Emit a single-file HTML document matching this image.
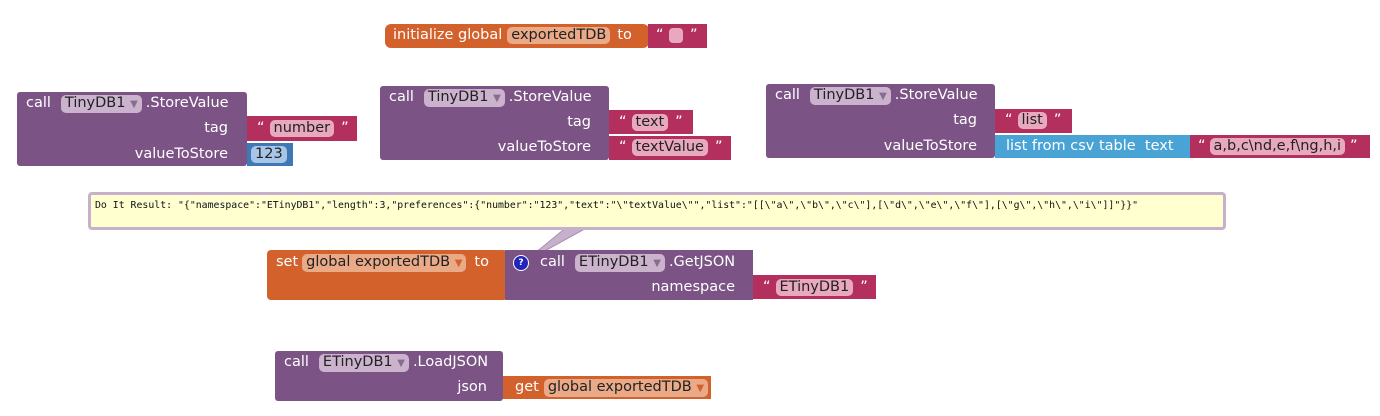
<!DOCTYPE html>
<html><head><meta charset="utf-8"><style>
body{margin:0;width:1380px;height:416px;background:#fff;position:relative;overflow:hidden;font-family:"DejaVu Sans","Liberation Sans",sans-serif;font-size:14.5px;}
.b{position:absolute;}
.p{background:#7b5385;border-radius:3px;}
.r{background:#b3305e;}
.o{background:#d2612c;}
.bl{background:#3f79b5;}
.c{background:#4aa3d5;}
.row{position:absolute;display:flex;align-items:center;gap:7px;color:#fff;white-space:nowrap;line-height:17px;height:17px;}
.t{position:absolute;color:#fff;white-space:nowrap;line-height:17px;}
.rt{position:absolute;color:#fff;white-space:nowrap;line-height:17px;text-align:right;}
.f{white-space:nowrap;line-height:17px;color:#222;border-radius:5px;padding:0 4px;}
.fp{background:#cbb3ce;}
.fr{background:#e8a9bf;}
.fo{background:#eaa987;}
.fb{background:#a7c5e6;}
.ar{color:#8a6c90;font-size:10px;}
.aro{color:#d2612c;font-size:10px;}
</style></head><body>

<!-- init global -->
<div class="b o" style="left:385px;top:24px;width:264px;height:24px;border-radius:6px"></div>
<div class="b r" style="left:648px;top:24px;width:59px;height:24px"></div>
<div class="row" style="left:393px;top:27px"><span>initialize global</span><span class="f fo" style="margin-left:-2px">exportedTDB</span><span>to</span></div>
<span class="t" style="left:656px;top:27px">“</span>
<div class="b" style="left:669px;top:28px;width:14px;height:15px;background:#e8a9bf;border-radius:4px"></div>
<span class="t" style="left:690px;top:27px">”</span>

<!-- Block A -->
<div class="b p" style="left:17px;top:92px;width:230px;height:74px"></div>
<div class="b r" style="left:247px;top:116px;width:110px;height:25px"></div>
<div class="b bl" style="left:247px;top:143px;width:46px;height:23px"></div>
<div class="row" style="left:26px;top:95px"><span style="margin-right:3px">call</span><span class="f fp">TinyDB1 <span class="ar">▼</span></span><span style="margin-left:-3px">.StoreValue</span></div>
<span class="rt" style="right:1152px;top:120px">tag</span>
<span class="rt" style="right:1152px;top:146px">valueToStore</span>
<div class="row" style="left:257px;top:120px"><span>“</span><span class="f fr" style="margin-left:-2px">number</span><span>”</span></div>
<span class="f fb" style="position:absolute;left:251px;top:146px">123</span>

<!-- Block B -->
<div class="b p" style="left:380px;top:86px;width:229px;height:74px"></div>
<div class="b r" style="left:609px;top:110px;width:84px;height:24px"></div>
<div class="b r" style="left:609px;top:136px;width:122px;height:24px"></div>
<div class="row" style="left:389px;top:89px"><span style="margin-right:3px">call</span><span class="f fp">TinyDB1 <span class="ar">▼</span></span><span style="margin-left:-3px">.StoreValue</span></div>
<span class="rt" style="right:789px;top:114px">tag</span>
<span class="rt" style="right:789px;top:139px">valueToStore</span>
<div class="row" style="left:619px;top:114px"><span>“</span><span class="f fr" style="margin-left:-2px">text</span><span>”</span></div>
<div class="row" style="left:619px;top:139px"><span>“</span><span class="f fr" style="margin-left:-2px">textValue</span><span>”</span></div>

<!-- Block C -->
<div class="b p" style="left:766px;top:84px;width:229px;height:74px"></div>
<div class="b r" style="left:995px;top:109px;width:77px;height:24px"></div>
<div class="b c" style="left:995px;top:135px;width:195px;height:23px"></div>
<div class="b r" style="left:1190px;top:135px;width:180px;height:23px"></div>
<div class="row" style="left:775px;top:87px"><span style="margin-right:3px">call</span><span class="f fp">TinyDB1 <span class="ar">▼</span></span><span style="margin-left:-3px">.StoreValue</span></div>
<span class="rt" style="right:403px;top:112px">tag</span>
<span class="rt" style="right:403px;top:138px">valueToStore</span>
<div class="row" style="left:1005px;top:112px"><span>“</span><span class="f fr" style="margin-left:-2px">list</span><span>”</span></div>
<span class="t" style="left:1006px;top:138px">list from csv table&nbsp; text</span>
<div class="row" style="left:1198px;top:138px;gap:5px"><span>“</span><span class="f fr" style="margin-left:-1px">a,b,c\nd,e,f\ng,h,i</span><span>”</span></div>

<!-- Result -->
<svg class="b" style="left:0;top:0" width="1380" height="416">
<polygon points="568,226 590,226 523,263" fill="#c7b0cb" stroke="#a98fb0"/>
</svg>
<div class="b" style="left:88px;top:192px;width:1132px;height:32px;background:#ffffd0;border:3px solid #c7b0cb;border-radius:4px"></div>
<span class="b" style="left:95px;top:200px;font-family:'DejaVu Sans Mono','Liberation Mono',monospace;font-size:9.85px;color:#111;white-space:nowrap">Do It Result: "{"namespace":"ETinyDB1","length":3,"preferences":{"number":"123","text":"\"textValue\"","list":"[[\"a\",\"b\",\"c\"],[\"d\",\"e\",\"f\"],[\"g\",\"h\",\"i\"]]"}}"</span>

<!-- set block -->
<div class="b o" style="left:267px;top:250px;width:240px;height:50px;border-radius:4px"></div>
<div class="b p" style="left:505px;top:250px;width:248px;height:50px;border-radius:0"></div>
<div class="b r" style="left:753px;top:275px;width:123px;height:24px"></div>
<div class="row" style="left:276px;top:254px"><span>set</span><span class="f fo" style="margin-left:-3px">global exportedTDB <span class="aro">▼</span></span><span style="margin-left:1px">to</span></div>
<div class="b" style="left:513px;top:255px;width:14px;height:14px;border-radius:50%;background:#2424b8;border:1px solid #fff;color:#fff;font-size:9px;line-height:14px;text-align:center;font-weight:bold">?</div>
<div class="row" style="left:540px;top:254px"><span style="margin-right:3px">call</span><span class="f fp">ETinyDB1 <span class="ar">▼</span></span><span style="margin-left:-3px">.GetJSON</span></div>
<span class="rt" style="right:645px;top:279px">namespace</span>
<div class="row" style="left:763px;top:279px"><span>“</span><span class="f fr" style="margin-left:-2px">ETinyDB1</span><span>”</span></div>

<!-- Load -->
<div class="b p" style="left:275px;top:351px;width:228px;height:50px"></div>
<div class="b o" style="left:503px;top:376px;width:208px;height:23px"></div>
<div class="row" style="left:284px;top:354px"><span style="margin-right:3px">call</span><span class="f fp">ETinyDB1 <span class="ar">▼</span></span><span style="margin-left:-3px">.LoadJSON</span></div>
<span class="rt" style="right:893px;top:379px">json</span>
<div class="row" style="left:515px;top:379px"><span>get</span><span class="f fo" style="margin-left:-2px">global exportedTDB <span class="aro">▼</span></span></div>
</body></html>
